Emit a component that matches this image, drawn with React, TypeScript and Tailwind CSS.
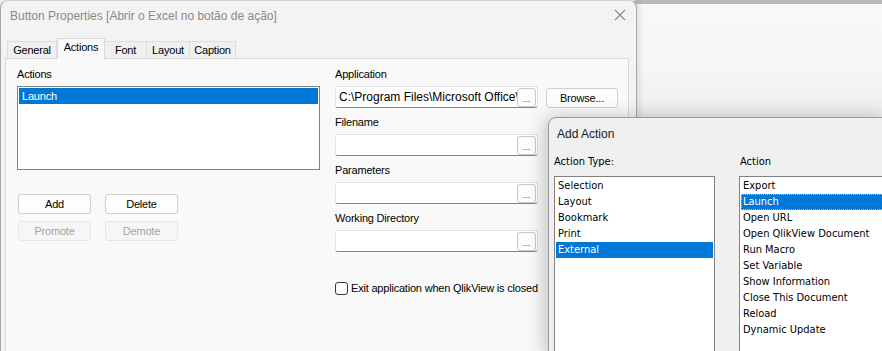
import React from "react";

const SANS = "font-['Liberation_Sans',Arial,sans-serif]";
const TAHOMA = "font-['DejaVu_Sans_Condensed','DejaVu_Sans',sans-serif] font-stretch-condensed";

function Btn({ label, disabled }: { label: string; disabled?: boolean }) {
  return (
    <div
      className={
        disabled
          ? "w-[73px] h-[20px] flex items-center justify-center rounded-[3px] border border-[#e6e6e6] bg-[#f6f6f6] text-[#a3a3a3] text-[11px] tracking-[-0.2px]"
          : "w-[73px] h-[20px] flex items-center justify-center rounded-[3px] border border-[#cfcfcf] bg-[#fdfdfd] text-black text-[11px] tracking-[-0.2px]"
      }
    >
      {label}
    </div>
  );
}

function Field({ label, value }: { label: string; value?: string }) {
  return (
    <div className="flex flex-col">
      <div className="h-[14px] leading-[14px] text-[11px] tracking-[-0.2px] text-black">{label}</div>
      <div className="mt-[5px] w-[203px] h-[22px] flex items-center rounded-[3px] border border-[#e2e2e2] border-b-[#858585] bg-white pl-[3px] pr-[1px]">
        <div className="flex-1 min-w-0 overflow-hidden whitespace-nowrap text-[12px] leading-[16px] text-black">{value ?? ""}</div>
        <div className="w-[19px] h-[19px] shrink-0 rounded-[3px] border border-[#c9c9c9] bg-[#fcfcfc] flex items-end justify-center pb-[3px] text-[9px] leading-[8px] text-[#333]">
          ...
        </div>
      </div>
    </div>
  );
}

function Tab({ label, w, active }: { label: string; w: string; active?: boolean }) {
  return active ? (
    <div className={`${w} h-[21px] -mb-px relative z-10 flex items-center justify-center border border-b-0 border-[#d9d9d9] bg-[#f9f9f9] text-[11px] tracking-[-0.2px] text-black pb-[3px]`}>
      {label}
    </div>
  ) : (
    <div className={`${w} h-[17px] flex items-center justify-center border border-b-0 border-[#dcdcdc] bg-[#f0f0f0] text-[11px] tracking-[-0.2px] text-black -ml-px`}>
      {label}
    </div>
  );
}

export default function App() {
  const types = ["Selection", "Layout", "Bookmark", "Print", "External"];
  const actions = [
    "Export",
    "Launch",
    "Open URL",
    "Open QlikView Document",
    "Run Macro",
    "Set Variable",
    "Show Information",
    "Close This Document",
    "Reload",
    "Dynamic Update",
  ];
  return (
    <div className={`relative w-[882px] h-[351px] overflow-hidden bg-[#f4f4f4] ${SANS}`}>
      {/* Back window on the right */}
      <div className="absolute left-[630px] top-0 w-[260px] h-[125px] rounded-tl-[7px] border-t-[4px] border-l border-[#b3bbbf] border-l-[#a9a9a9] bg-gradient-to-b from-[#f8f8f8] via-[#f7f7f7] to-[#ececec]" />

      {/* Main dialog */}
      <div className="absolute left-0 top-0 z-10 w-[637px] h-[360px] flex flex-col rounded-t-[8px] border border-[#a8a8a8] border-t-[#cfcfcf] bg-[#f3f3f3] shadow-[2px_0_6px_rgba(0,0,0,0.12)]">
        <div className="h-[29px] shrink-0 flex items-center justify-between pl-[9px] pr-[10px]">
          <div className="text-[12px] text-[#8a8a8a]">Button Properties [Abrir o Excel no botão de ação]</div>
          <svg width="12" height="12" viewBox="0 0 12 12" className="mt-[-1px]">
            <path d="M1 1 L11 11 M11 1 L1 11" stroke="#8c8c8c" strokeWidth="1.1" fill="none" />
          </svg>
        </div>
        <div className="h-[28px] shrink-0 flex items-end pl-[7px]">
          <Tab label="General" w="w-[50px]" />
          <Tab label="Actions" w="w-[48px]" active />
          <Tab label="Font" w="w-[43px]" />
          <Tab label="Layout" w="w-[44px]" />
          <Tab label="Caption" w="w-[47px]" />
        </div>
        <div className="ml-[4px] w-[624px] flex-1 border border-[#d9d9d9] bg-[#f9f9f9] flex pl-[11px] pt-[8px] gap-[15px]">
          {/* Left column */}
          <div className="w-[303px] flex flex-col">
            <div className="h-[14px] leading-[14px] text-[11px] tracking-[-0.2px] text-black">Actions</div>
            <div className="mt-[5px] h-[84px] border border-[#828282] bg-white p-px">
              <div className="h-[16px] bg-[#0078d7] text-white text-[11px] tracking-[-0.2px] leading-[16px] pl-[3px]">Launch</div>
            </div>
            <div className="mt-[24px] ml-px flex gap-[14px]">
              <Btn label="Add" />
              <Btn label="Delete" />
            </div>
            <div className="mt-[7px] ml-px flex gap-[14px]">
              <Btn label="Promote" disabled />
              <Btn label="Demote" disabled />
            </div>
          </div>
          {/* Right column */}
          <div className="w-[284px] flex flex-col">
            <div className="flex items-end gap-[8px]">
              <Field label="Application" value="C:\Program Files\Microsoft Office\" />
              <div className="w-[72px] h-[20px] flex items-center justify-center rounded-[3px] border border-[#cfcfcf] bg-[#fdfdfd] text-[11px] tracking-[-0.2px] text-black">
                Browse...
              </div>
            </div>
            <div className="mt-[7px]">
              <Field label="Filename" />
            </div>
            <div className="mt-[7px]">
              <Field label="Parameters" />
            </div>
            <div className="mt-[7px]">
              <Field label="Working Directory" />
            </div>
            <div className="mt-[28px] flex items-center gap-[3px]">
              <div className="w-[13px] h-[13px] rounded-[3px] border border-[#3a3a3a] bg-white" />
              <div className="text-[11px] tracking-[-0.2px] text-black">Exit application when QlikView is closed</div>
            </div>
          </div>
        </div>
      </div>

      {/* Add Action dialog */}
      <div className="absolute left-[548px] top-[117px] z-20 w-[340px] h-[240px] flex flex-col rounded-tl-[8px] border border-[#9a9a9a] bg-[#f0f0f0] shadow-[-4px_0_18px_rgba(0,0,0,0.22)]">
        <div className="h-[31px] shrink-0 flex items-center pl-[8px] text-[12px] text-[#1b1b1b]">Add Action</div>
        <div className={`flex pt-[6px] pl-[5px] gap-[24px] ${TAHOMA} text-[11px] text-black`}>
          <div className="w-[161px] flex flex-col">
            <div className="h-[14px] leading-[14px]">Action Type:</div>
            <div className="mt-[7px] h-[180px] shrink-0 border border-[#828282] bg-white p-px">
              {types.map((t) => (
                <div
                  key={t}
                  className={
                    t === "External"
                      ? "h-[16px] leading-[16px] pl-[2px] bg-[#0078d7] text-white"
                      : "h-[16px] leading-[16px] pl-[2px]"
                  }
                >
                  {t}
                </div>
              ))}
            </div>
          </div>
          <div className="flex-1 flex flex-col">
            <div className="h-[14px] leading-[14px] pl-px">Action</div>
            <div className="mt-[7px] h-[180px] shrink-0 border border-r-0 border-[#828282] bg-white p-px">
              {actions.map((a) => (
                <div
                  key={a}
                  className={
                    a === "Launch"
                      ? "h-[16px] leading-[14px] pl-px bg-[#0078d7] text-white border border-dotted border-[#9fc6ea]"
                      : "h-[16px] leading-[16px] pl-[2px]"
                  }
                >
                  {a}
                </div>
              ))}
            </div>
          </div>
        </div>
      </div>
    </div>
  );
}
